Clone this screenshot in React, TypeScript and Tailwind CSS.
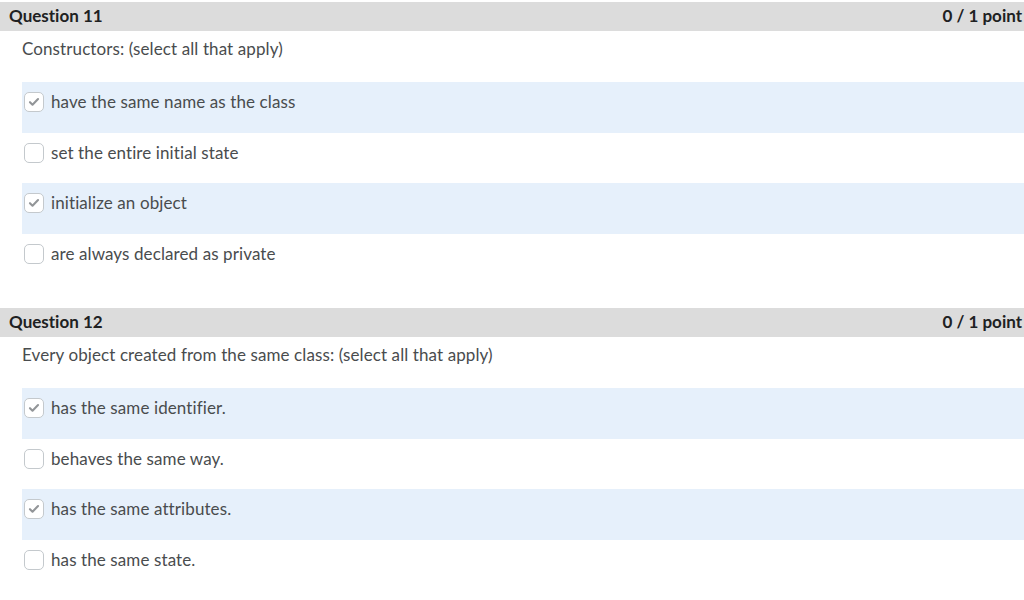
type Option = { label: string; checked: boolean };

type Question = { title: string; score: string; prompt: string; options: Option[] };

const questions: Question[] = [
  {
    title: "Question 11",
    score: "0 / 1 point",
    prompt: "Constructors: (select all that apply)",
    options: [
      { label: "have the same name as the class", checked: true },
      { label: "set the entire initial state", checked: false },
      { label: "initialize an object", checked: true },
      { label: "are always declared as private", checked: false },
    ],
  },
  {
    title: "Question 12",
    score: "0 / 1 point",
    prompt: "Every object created from the same class: (select all that apply)",
    options: [
      { label: "has the same identifier.", checked: true },
      { label: "behaves the same way.", checked: false },
      { label: "has the same attributes.", checked: true },
      { label: "has the same state.", checked: false },
    ],
  },
];

function Checkbox({ checked }: { checked: boolean }) {
  return (
    <span className="flex h-5 w-5 shrink-0 items-center justify-center rounded-[5px] border border-[#c4c9cd] bg-white">
      {checked ? (
        <svg viewBox="0 0 16 16" className="h-[14px] w-[14px]" fill="none">
          <path d="M3.4 8.2l2.9 2.9 6.3-6.5" stroke="#929598" strokeWidth="2.4" strokeLinecap="round" strokeLinejoin="round" />
        </svg>
      ) : null}
    </span>
  );
}

function QuestionBlock({ q }: { q: Question }) {
  return (
    <section>
      <div className="flex h-[29px] items-center justify-between bg-[#dcdcdc] pb-[1px] pl-[9px] pr-[2px] text-[17px] font-bold text-[#202122]">
        <span>{q.title}</span>
        <span>{q.score}</span>
      </div>
      <p className="mb-[21px] mt-[6px] pl-[22px] text-[17px] leading-6 tracking-[0.1px] text-[#494c4e]">{q.prompt}</p>
      <ul className="ml-[22px]">
        {q.options.map((opt, i) => (
          <li
            key={opt.label}
            className={`pl-[2px] pt-[8px] text-[17px] tracking-[0.1px] text-[#494c4e] ${i % 2 === 0 ? "h-[51px]" : "h-[50px]"} ${opt.checked ? "bg-[#e6f0fb]" : "bg-white"}`}
          >
            <div className="flex h-6 items-center gap-[7px]">
              <Checkbox checked={opt.checked} />
              <span>{opt.label}</span>
            </div>
          </li>
        ))}
      </ul>
    </section>
  );
}

export default function App() {
  return (
    <div className="flex h-[600px] w-[1024px] flex-col gap-[24px] overflow-hidden bg-white pt-[2px] font-['Lato',sans-serif] [font-variant-ligatures:none]">
      {questions.map((q) => (
        <QuestionBlock key={q.title} q={q} />
      ))}
    </div>
  );
}
